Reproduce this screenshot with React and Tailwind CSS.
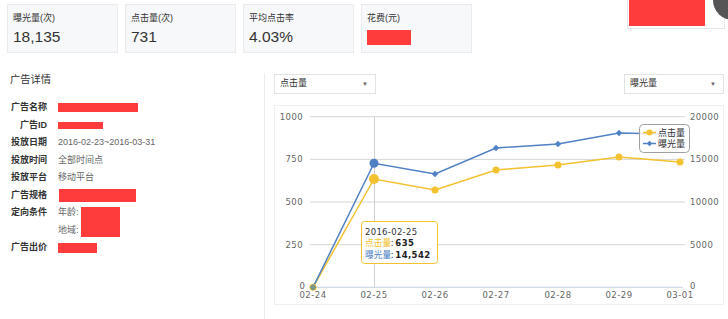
import React from "react";

const XS = [313, 374, 435, 496, 558, 619, 680];
const DATES = ["02-24", "02-25", "02-26", "02-27", "02-28", "02-29", "03-01"];
const CLICKS = [0, 635, 570, 688, 717, 764, 734];
const EXPO = [0, 14542, 13283, 16330, 16800, 18090, 17950];
const Y0 = 287.3;
const yc = (v) => Y0 - (v / 1000) * 170.6;
const ye = (v) => Y0 - (v / 20000) * 170.6;
const YEL = "#f2c231";
const BLU = "#4f81c4";

function Chart() {
  const clickPts = XS.map((x, i) => `${x},${yc(CLICKS[i])}`).join(" ");
  const expoPts = XS.map((x, i) => `${x},${ye(EXPO[i])}`).join(" ");
  const grid = [1000, 750, 500, 250];
  const rgrid = ["20000", "15000", "10000", "5000"];
  const font = "'DejaVu Sans', sans-serif";
  const cjk = "'Noto Sans CJK SC', sans-serif";
  return (
    <svg width="448" height="198" viewBox="275 106 448 198" className="block">
      {grid.map((g, i) => (
        <line key={g} x1="310" x2="685" y1={yc(g)} y2={yc(g)} stroke="#d4d4d4" strokeWidth="1" />
      ))}
      <line x1="310" x2="683" y1={Y0} y2={Y0} stroke="#c6d2e2" strokeWidth="1" />
      <line x1="374.5" x2="374.5" y1={yc(1000)} y2={Y0} stroke="#cfcfcf" strokeWidth="1" />
      {grid.map((g) => (
        <text key={g} x="303" y={yc(g) + 3} textAnchor="end" fontSize="8.5" fill="#666" fontFamily={font} letterSpacing="0.4">
          {g}
        </text>
      ))}
      <text x="305" y={Y0 + 2} textAnchor="end" fontSize="8.5" fill="#666" fontFamily={font}>0</text>
      {rgrid.map((g, i) => (
        <text key={g} x="690" y={ye((4 - i) * 5000) + 3} fontSize="8.5" fill="#666" fontFamily={font} letterSpacing="0.4">
          {g}
        </text>
      ))}
      <text x="690" y={Y0 + 2} fontSize="8.5" fill="#666" fontFamily={font}>0</text>
      {DATES.map((d, i) => (
        <text key={d} x={XS[i]} y="297.5" textAnchor="middle" fontSize="8.5" fill="#666" fontFamily={font} letterSpacing="0.5">
          {d}
        </text>
      ))}
      <polyline points={clickPts} fill="none" stroke={YEL} strokeWidth="1.5" />
      <polyline points={expoPts} fill="none" stroke={BLU} strokeWidth="1.5" />
      {XS.map((x, i) =>
        i === 1 ? null : <circle key={"c" + i} cx={x} cy={yc(CLICKS[i])} r="3.5" fill={YEL} />
      )}
      {XS.map((x, i) =>
        i === 1 ? null : (
          <polygon
            key={"d" + i}
            points={`${x},${ye(EXPO[i]) - 3.2} ${x + 3.2},${ye(EXPO[i])} ${x},${ye(EXPO[i]) + 3.2} ${x - 3.2},${ye(EXPO[i])}`}
            fill={BLU}
          />
        )
      )}
      <circle cx="313" cy={Y0} r="2.5" fill="#7a9a8a" />
      <circle cx={XS[1]} cy={yc(CLICKS[1])} r="5" fill={YEL} />
      <circle cx={XS[1]} cy={ye(EXPO[1])} r="4.5" fill={BLU} />

      {/* legend */}
      <rect x="639.5" y="124.5" width="50" height="28" rx="4" fill="#ffffff" fillOpacity="0.8" stroke="#a0a0a0" />
      <line x1="643" x2="656" y1="132.5" y2="132.5" stroke={YEL} strokeWidth="1.5" />
      <circle cx="649.5" cy="132.5" r="3" fill={YEL} />
      <text x="658" y="135.5" fontSize="9" fill="#333" fontFamily={cjk}>点击量</text>
      <line x1="643" x2="656" y1="143.5" y2="143.5" stroke={BLU} strokeWidth="1.5" />
      <polygon points="649.5,140.8 652.2,143.5 649.5,146.2 646.8,143.5" fill={BLU} />
      <text x="658" y="146.5" fontSize="9" fill="#333" fontFamily={cjk}>曝光量</text>

      {/* tooltip */}
      <rect x="361.5" y="221.5" width="76" height="42" rx="3" fill="#ffffff" fillOpacity="0.88" stroke={YEL} />
      <text x="365" y="235" fontSize="8.5" fill="#333" fontFamily={font} letterSpacing="0.3">2016-02-25</text>
      <text x="365" y="246" fontSize="8.5" fontFamily={cjk}>
        <tspan fill={YEL} fontSize="8.7">点击量</tspan>
        <tspan fill="#333">: </tspan>
        <tspan fill="#222" fontWeight="bold" fontFamily={font} letterSpacing="0.4">635</tspan>
      </text>
      <text x="365" y="257.5" fontSize="8.5" fontFamily={cjk}>
        <tspan fill={BLU} fontSize="8.7">曝光量</tspan>
        <tspan fill="#333">: </tspan>
        <tspan fill="#222" fontWeight="bold" fontFamily={font} letterSpacing="0.4">14,542</tspan>
      </text>
    </svg>
  );
}

function StatCard({ label, value, red }) {
  return (
    <div className="w-[111px] h-[49px] bg-[#f7f8fa] border border-[#e9ebee] pl-[5px] pt-[7px]">
      <div className="text-[9px] leading-[12px] text-[#333]">{label}</div>
      {red ? (
        <div className="mt-[6px] w-[44px] h-[15px] bg-[#ff3c3c]" />
      ) : (
        <div className="mt-[3px] text-[15.5px] leading-[20px] text-[#333] font-['Liberation_Sans',sans-serif]">{value}</div>
      )}
    </div>
  );
}

function Row({ label, children }) {
  return (
    <div className="flex items-center h-[17.5px]">
      <div className="w-[37px] text-right text-[9px] font-bold text-[#333] whitespace-nowrap">{label}</div>
      <div className="ml-[11px] flex items-center text-[9px] text-[#666]">{children}</div>
    </div>
  );
}

function Select({ label, w }) {
  return (
    <div className={`${w} h-[20px] border border-[#e3e3e3] flex items-center justify-between pl-[5px] pr-[7px]`}>
      <span className="text-[9px] text-[#333]">{label}</span>
      <span className="text-[6px] text-[#666]">▼</span>
    </div>
  );
}

export default function App() {
  return (
    <div className="relative w-[728px] h-[319px] overflow-hidden bg-white font-['Liberation_Sans','Noto_Sans_CJK_SC',sans-serif]">
      <div className="flex gap-[7px] pl-[7px] pt-[4px]">
        <StatCard label="曝光量(次)" value="18,135" />
        <StatCard label="点击量(次)" value="731" />
        <StatCard label="平均点击率" value="4.03%" />
        <StatCard label="花费(元)" red />
      </div>

      <div className="flex mt-[20px] h-[246px]">
        <div className="w-[265px] border-r border-[#ececec] pl-[10px]">
          <div className="text-[10.25px] leading-[14px] text-[#333]">广告详情</div>
          <div className="mt-[12px]">
            <Row label="广告名称">
              <div className="w-[80px] h-[9px] bg-[#ff3c3c]" />
            </Row>
            <Row label="广告ID">
              <div className="w-[45px] h-[7px] bg-[#ff3c3c]" />
            </Row>
            <Row label="投放日期">2016-02-23~2016-03-31</Row>
            <Row label="投放时间">全部时间点</Row>
            <Row label="投放平台">移动平台</Row>
            <Row label="广告规格">
              <div className="ml-[1px] w-[77px] h-[13px] bg-[#ff3c3c]" />
            </Row>
            <div className="flex">
              <div className="w-[37px] h-[17.5px] flex items-center justify-end text-[9px] font-bold text-[#333] whitespace-nowrap">定向条件</div>
              <div className="ml-[11px] flex text-[9px] text-[#666]">
                <div>
                  <div className="h-[17.5px] flex items-center">年龄:</div>
                  <div className="h-[17.5px] flex items-center">地域:</div>
                </div>
                <div className="ml-[2px] mt-[3px] w-[39px] h-[30px] bg-[#ff3c3c]" />
              </div>
            </div>
            <Row label="广告出价">
              <div className="w-[39px] h-[10px] bg-[#ff3c3c]" />
            </Row>
          </div>
        </div>

        <div className="flex-1 pl-[9px] pr-[4px] pt-[1px]">
          <div className="flex justify-between">
            <Select label="点击量" w="w-[102px]" />
            <Select label="曝光量" w="w-[100px]" />
          </div>
          <div className="mt-[11px] w-[450px] h-[200px] border border-[#f0f0f0]">
            <Chart />
          </div>
        </div>
      </div>

      <div className="absolute left-[627px] top-[-1px] w-[98px] h-[30px] bg-white border border-[#e5e7eb]">
        <div className="ml-[1px] w-[76px] h-[26px] bg-[#ff3c3c]" />
      </div>
      <div className="absolute left-[713px] top-[-20px] w-[40px] h-[40px] rounded-full bg-[#555]" />
    </div>
  );
}
